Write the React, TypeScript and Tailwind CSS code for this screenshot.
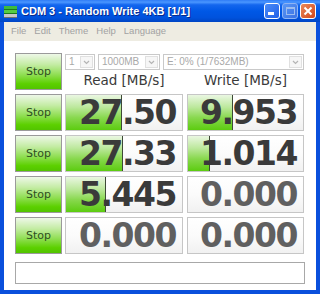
import React from "react";

const rows = [
  { read: "27.50", readBar: 57, write: "9.953", writeBar: 46 },
  { read: "27.33", readBar: 58, write: "1.014", writeBar: 23 },
  { read: "5.445", readBar: 41, write: "0.000", writeBar: 0 },
  { read: "0.000", readBar: 0, write: "0.000", writeBar: 0 },
];

function StopButton() {
  return (
    <div className="w-[47px] h-[37px] shrink-0 border border-[#9a9a9a] bg-[linear-gradient(to_bottom,#eef8e8_0%,#c4eca4_30%,#8ede50_60%,#5cd000_85%,#52c400_100%)] flex items-center justify-center">
      <span className="text-[11px] text-[#2f4f22] font-['DejaVu_Sans',sans-serif] mt-[2px]">Stop</span>
    </div>
  );
}

function Cell({ value, bar, w }: { value: string; bar: number; w: string }) {
  const zero = value === "0.000";
  return (
    <div className={`relative ${w} h-[37px] shrink-0 border border-[#c6c6c6] bg-[linear-gradient(to_bottom,#ffffff_0%,#fbfbfb_50%,#f1f1f1_100%)] overflow-hidden`}>
      {bar > 0 && (
        <div
          className="absolute left-0 top-0 bottom-0 border-r border-[#3e4a36] bg-[linear-gradient(to_bottom,#eaf7e2_0%,#bce89c_35%,#88d84e_65%,#5ccc10_100%)]"
          style={{ width: bar - 1 }}
        />
      )}
      <div
        className={`relative h-full flex items-center justify-end pr-[6px] font-['DejaVu_Sans',sans-serif] font-bold text-[33px] tracking-[-1.5px] leading-none ${
          zero ? "text-[#606060]" : "text-[#3a3a3a]"
        }`}
      >
        {value}
      </div>
    </div>
  );
}

function Combo({ text, w }: { text: string; w: string }) {
  return (
    <div className={`${w} h-[16px] border border-[#c9c9c9] bg-white flex items-center`}>
      <span className="flex-1 pl-[3px] text-[10px] leading-none text-[#a9a9a9] font-['Liberation_Sans',sans-serif] whitespace-nowrap overflow-hidden">
        {text}
      </span>
      <div className="w-[13px] h-[12px] mr-[1px] border border-[#e0e0e0] bg-[#f6f6f6] flex items-center justify-center">
        <svg width="7" height="5" viewBox="0 0 7 5">
          <path d="M1 1 L3.5 3.5 L6 1" fill="none" stroke="#b4b4b4" strokeWidth="1.2" />
        </svg>
      </div>
    </div>
  );
}

export default function App() {
  return (
    <div className="w-[320px] h-[294px] bg-[#0a50dc] flex flex-col overflow-hidden">
      {/* Title bar */}
      <div className="h-[22px] shrink-0 flex items-center bg-[linear-gradient(to_bottom,#2f7cf6_0%,#4a96ff_10%,#1466ee_22%,#0058e6_50%,#0052dd_80%,#0045c4_100%)]">
        <svg width="14" height="13" viewBox="0 0 14 13" className="ml-[4px]">
          <rect x="0" y="1" width="13" height="3" fill="#3dbb3d" />
          <rect x="0" y="4" width="13" height="1" fill="#1d7a1d" />
          <rect x="0" y="5" width="13" height="3" fill="#55cc44" />
          <rect x="0" y="8" width="13" height="1" fill="#1d7a1d" />
          <rect x="0" y="9" width="13" height="3" fill="#c8c8c8" />
          <rect x="0" y="12" width="13" height="1" fill="#707070" />
        </svg>
        <span className="ml-[3px] text-white font-bold text-[11px] font-['Liberation_Sans',sans-serif] [text-shadow:1px_1px_0_#0a2a8a] whitespace-nowrap">
          CDM 3 - Random Write 4KB [1/1]
        </span>
        <div className="ml-auto mr-[4px] flex items-center gap-[2px]">
          <div className="w-[16px] h-[16px] rounded-[3px] border border-white bg-[linear-gradient(135deg,#4a8cf8,#2060e8)] flex items-end justify-start">
            <div className="w-[6px] h-[3px] bg-white ml-[3px] mb-[3px]" />
          </div>
          <div className="w-[16px] h-[16px] rounded-[3px] border border-[#8fb4f4] bg-[linear-gradient(135deg,#5a96f4,#3a72e4)] flex items-center justify-center">
            <div className="w-[9px] h-[8px] border border-[#9cbcf0] border-t-2" />
          </div>
          <div className="w-[16px] h-[16px] rounded-[3px] border border-white bg-[linear-gradient(135deg,#e8885a,#d4481c)] flex items-center justify-center">
            <svg width="10" height="10" viewBox="0 0 10 10">
              <path d="M1.5 1.5 L8.5 8.5 M8.5 1.5 L1.5 8.5" stroke="white" strokeWidth="2" />
            </svg>
          </div>
        </div>
      </div>

      {/* Body */}
      <div className="flex-1 flex flex-col px-[4px] pb-[4px]">
        <div className="flex-1 flex flex-col bg-white">
          {/* Menu */}
          <div className="h-[19px] shrink-0 bg-[#eeece2] flex items-center pl-[7px] gap-[8px] text-[9.5px] text-[#a2a2a2] font-['Liberation_Sans',sans-serif]">
            <span>File</span>
            <span>Edit</span>
            <span>Theme</span>
            <span>Help</span>
            <span>Language</span>
          </div>

          {/* Content */}
          <div className="flex flex-col pl-[11px] pt-[12px] gap-[4px]">
            <div className="flex">
              <StopButton />
              <div className="ml-[3px] flex flex-col">
                <div className="flex gap-[3px] mt-[1px]">
                  <Combo text="1" w="w-[30px]" />
                  <Combo text="1000MB" w="w-[62px]" />
                  <Combo text="E: 0% (1/7632MB)" w="w-[141px]" />
                </div>
                <div className="flex h-[20px] items-center text-[13.5px] text-[#3a3a3a] font-['DejaVu_Sans',sans-serif]">
                  <div className="w-[118px] text-center">Read [MB/s]</div>
                  <div className="ml-[4px] w-[117px] text-center">Write [MB/s]</div>
                </div>
              </div>
            </div>

            {rows.map((r, i) => (
              <div key={i} className="flex">
                <StopButton />
                <div className="ml-[3px]">
                  <Cell value={r.read} bar={r.readBar} w="w-[118px]" />
                </div>
                <div className="ml-[4px]">
                  <Cell value={r.write} bar={r.writeBar} w="w-[117px]" />
                </div>
              </div>
            ))}

            <div className="mt-[4px] w-[290px] h-[22px] border border-[#a8a8a8] bg-white" />
          </div>
        </div>
      </div>
    </div>
  );
}
